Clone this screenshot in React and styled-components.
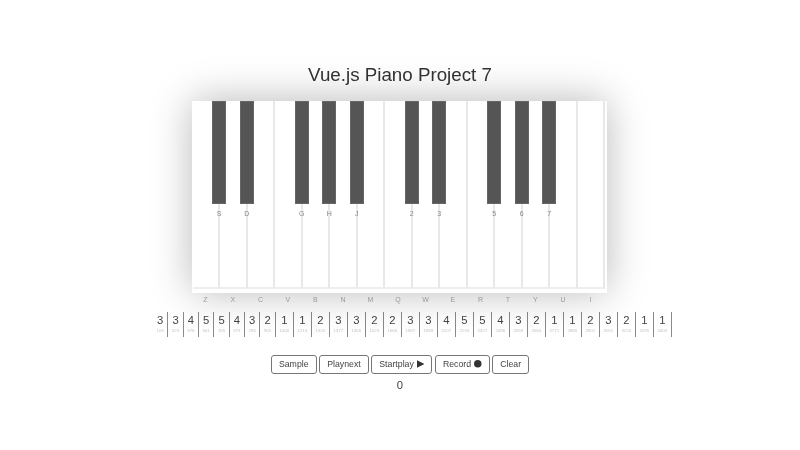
import React from 'react';
import styled, { createGlobalStyle } from 'styled-components';

const GlobalStyle = createGlobalStyle`
    html, body {
        margin: 0;
        padding: 0;
        background: #fff;
    }
    body {
        font-family: "Liberation Sans", Arial, sans-serif;
        color: #333;
    }
`

const Page = styled.div`
    width: 800px;
    height: 450px;
    overflow: hidden;
    display: flex;
    flex-direction: column;
    align-items: center;
    padding-top: 63px;
    box-sizing: border-box;
    will-change: transform;
`

const Title = styled.h1`
    margin: 0 0 15px;
    font-size: 18.75px;
    line-height: 23px;
    font-weight: 400;
    color: #333;
`

const Keyboard = styled.div`
    position: relative;
    width: 414.3px;
    height: 192px;
    margin-right: .9px;
    padding: 0 1.5px 0 .3px;
    display: flex;
    background: #fff;
    border-bottom: 4px solid #fff;
    box-sizing: border-box;
    box-shadow: 0 -1px 38px rgba(0, 0, 0, .28);
`

const WhiteKey = styled.div`
    position: relative;
    flex: 1;
    border-right: 2px solid #e8e8e8;
    border-bottom: 2px solid #eee;
`

const WhiteLabel = styled.span`
    position: absolute;
    left: 0;
    right: 0;
    bottom: -17px;
    text-align: center;
    font-size: 7px;
    line-height: 8px;
    color: #999;
`

const BlackKey = styled.div`
    position: absolute;
    top: 0;
    right: -8px;
    width: 14px;
    height: 103px;
    background: #555;
    border: 1px solid #666;
    box-sizing: border-box;
    z-index: 1;
`

const BlackLabel = styled.span`
    position: absolute;
    top: 109px;
    right: -8px;
    width: 14px;
    text-align: center;
    font-size: 7px;
    line-height: 8px;
    color: #888;
    z-index: 1;
`

const Score = styled.div`
    display: flex;
    margin: 19px 0 0 24.8px;
    height: 25px;
    align-items: stretch;
`

const Note = styled.div`
    width: ${props => props.wide ? "18px" : "15.35px"};
    box-sizing: border-box;
    border-right: 1.5px solid #8a8a8a;
    display: flex;
    flex-direction: column;
    align-items: center;
    font-size: 11.25px;
    line-height: 13px;
    padding-top: 2px;
    color: #444;
`

const NoteTime = styled.span`
    margin-top: 1px;
    font-size: 4.4px;
    line-height: 6px;
    color: #c4c4c4;
`

const Controls = styled.div`
    display: flex;
    gap: 2.4px;
    margin-top: 17.5px;
`

const Button = styled.button`
    display: flex;
    align-items: center;
    gap: 3px;
    height: 19px;
    padding: 0 7.1px;
    background: #fff;
    border: 1px solid #777;
    border-radius: 3px;
    font-family: inherit;
    font-size: 8.75px;
    color: #444;
`

const Counter = styled.div`
    margin-top: 4.5px;
    font-size: 11.25px;
    line-height: 14px;
    color: #444;
`

const whiteKeys = [
    { label: 'Z', black: 'S' },
    { label: 'X', black: 'D' },
    { label: 'C' },
    { label: 'V', black: 'G' },
    { label: 'B', black: 'H' },
    { label: 'N', black: 'J' },
    { label: 'M' },
    { label: 'Q', black: '2' },
    { label: 'W', black: '3' },
    { label: 'E' },
    { label: 'R', black: '5' },
    { label: 'T', black: '6' },
    { label: 'Y', black: '7' },
    { label: 'U' },
    { label: 'I' },
]

const notes = [
    [3, 105], [3, 323], [4, 378], [5, 561], [5, 765], [4, 973], [3, 785], [2, 955],
    [1, 1000], [1, 1213], [2, 1320], [3, 1377], [3, 1456], [2, 1523], [2, 1666], [3, 1887],
    [3, 1989], [4, 2107], [5, 2133], [5, 2327], [4, 2496], [3, 2559], [2, 2664], [1, 2771],
    [1, 2880], [2, 2901], [3, 3161], [2, 3220], [1, 3295], [1, 3400],
]

function Piano() {
    return (
        <Keyboard>
            {whiteKeys.map(key => (
                <WhiteKey key={key.label}>
                    {key.black && <BlackKey />}
                    {key.black && <BlackLabel>{key.black}</BlackLabel>}
                    <WhiteLabel>{key.label}</WhiteLabel>
                </WhiteKey>
            ))}
        </Keyboard>
    )
}

export default function App() {
    return (
        <Page>
            <GlobalStyle />
            <Title>Vue.js Piano Project 7</Title>
            <Piano />
            <Score>
                {notes.map(([value, time], i) => (
                    <Note key={i} wide={i >= 8}>
                        {value}
                        <NoteTime>{time}</NoteTime>
                    </Note>
                ))}
            </Score>
            <Controls>
                <Button>Sample</Button>
                <Button>Playnext</Button>
                <Button>Startplay
                    <svg width="7.5" height="8" viewBox="0 0 8 8"><path d="M0 0L8 4L0 8Z" fill="#333" /></svg>
                </Button>
                <Button>Record
                    <svg width="7.5" height="7.5" viewBox="0 0 8 8"><circle cx="4" cy="4" r="4" fill="#333" /></svg>
                </Button>
                <Button>Clear</Button>
            </Controls>
            <Counter>0</Counter>
        </Page>
    )
}
